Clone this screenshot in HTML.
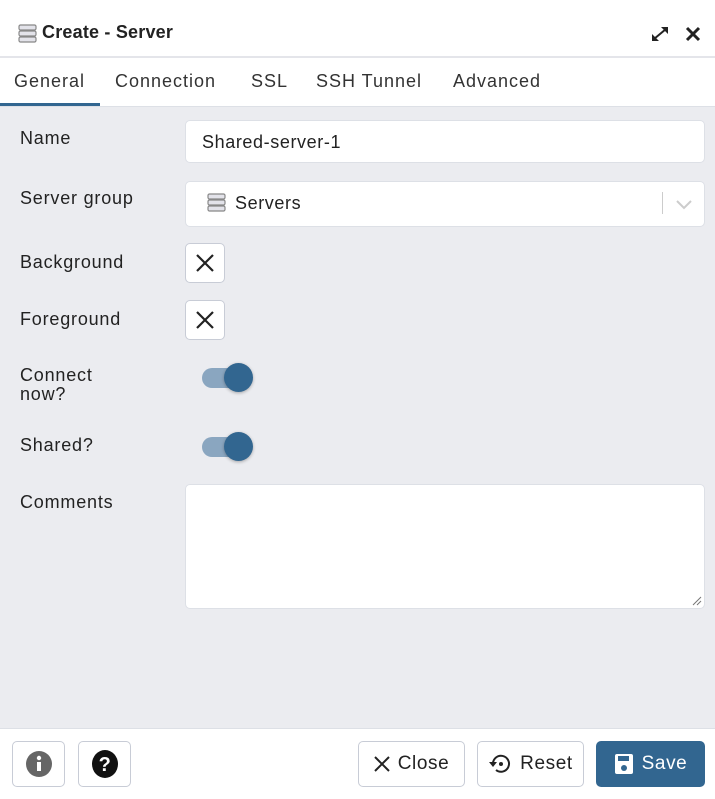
<!DOCTYPE html>
<html><head><style>
*{box-sizing:border-box;margin:0;padding:0}
body{width:715px;height:799px;background:#fff;font-family:"Liberation Sans",sans-serif;color:#222;position:relative;overflow:hidden}
.abs{position:absolute}
.title{left:18px;top:22px;font-size:18px;font-weight:bold;letter-spacing:0.2px;display:flex;align-items:center;gap:4px}
.hdrline{left:0;top:56px;width:715px;height:2px;background:#e4e5ea}
.tab{top:71px;font-size:18px;color:#333;letter-spacing:1px}
.uline{left:0;top:103px;width:100px;height:3px;background:#326690}
.body{left:0;top:106px;width:715px;height:623px;background:#ebecf0;border-top:1px solid #dde0e6;border-bottom:1px solid #dde0e6}
.lbl{left:20px;font-size:18px;color:#222;letter-spacing:0.8px}
.inp{background:#fff;border:1px solid #dde0e6;border-radius:5px}
.cb{width:40px;height:40px;background:#fff;border:1px solid #c8ccd6;border-radius:5px;left:185px}
.track{left:202px;width:48px;height:20px;border-radius:10px;background:#8aa6c0}
.knob{left:224px;width:29px;height:29px;border-radius:50%;background:#326690;box-shadow:0 1px 3px rgba(0,0,0,.3)}
.btn{top:741px;height:46px;border:1px solid #c8ccd6;border-radius:5px;background:#fff;display:flex;align-items:center;justify-content:center;font-size:19px;color:#222;gap:8px;letter-spacing:0.6px}
</style></head><body>
<div class="abs title"><svg width="20" height="20" viewBox="0 0 20 20"><g fill="#e3e3ea" stroke="#888" stroke-width="1.2"><rect x="1" y="2" width="17" height="5" rx="1.5"/><rect x="1" y="8" width="17" height="5" rx="1.5"/><rect x="1" y="14" width="17" height="5" rx="1.5"/></g></svg>Create - Server</div>
<svg class="abs" style="left:650px;top:25px" width="20" height="18" viewBox="0 0 20 18"><path d="M4 14 L16 4" stroke="#222" stroke-width="2"/><path d="M11 2h7v7z M2 9v7h7z" fill="#222"/></svg>
<svg class="abs" style="left:685px;top:26px" width="16" height="16" viewBox="0 0 16 16"><path d="M2 2L14 14M14 2L2 14" stroke="#222" stroke-width="3"/></svg>
<div class="abs hdrline"></div>
<div class="abs tab" style="left:14px">General</div>
<div class="abs tab" style="left:115px">Connection</div>
<div class="abs tab" style="left:251px">SSL</div>
<div class="abs tab" style="left:316px">SSH Tunnel</div>
<div class="abs tab" style="left:453px">Advanced</div>
<div class="abs body"></div>
<div class="abs uline"></div>
<div class="abs lbl" style="top:128px">Name</div>
<div class="abs inp" style="left:185px;top:120px;width:520px;height:43px;font-size:18px;padding:11px 0 0 16px;letter-spacing:0.6px">Shared-server-1</div>
<div class="abs lbl" style="top:188px">Server group</div>
<div class="abs inp" style="left:185px;top:181px;width:520px;height:46px"></div>
<svg class="abs" style="left:207px;top:192px" width="20" height="22" viewBox="0 0 20 22"><g fill="#e3e3ea" stroke="#888" stroke-width="1.2"><rect x="1" y="2" width="17" height="5" rx="1.5"/><rect x="1" y="8" width="17" height="5" rx="1.5"/><rect x="1" y="14" width="17" height="5" rx="1.5"/></g></svg>
<div class="abs" style="left:235px;top:193px;font-size:18px;letter-spacing:0.6px">Servers</div>
<div class="abs" style="left:662px;top:192px;width:1px;height:22px;background:#ccc"></div>
<svg class="abs" style="left:675px;top:198px" width="18" height="12" viewBox="0 0 18 12"><path d="M2 3l7 7 7-7" stroke="#ccc" stroke-width="2" fill="none"/></svg>
<div class="abs lbl" style="top:252px">Background</div>
<div class="abs cb" style="top:243px"><svg width="38" height="38" viewBox="0 0 38 38"><path d="M11 11L27 27M27 11L11 27" stroke="#222" stroke-width="2.2"/></svg></div>
<div class="abs lbl" style="top:309px">Foreground</div>
<div class="abs cb" style="top:300px"><svg width="38" height="38" viewBox="0 0 38 38"><path d="M11 11L27 27M27 11L11 27" stroke="#222" stroke-width="2.2"/></svg></div>
<div class="abs lbl" style="top:366px;line-height:19px">Connect<br>now?</div>
<div class="abs track" style="top:368px"></div><div class="abs knob" style="top:363px"></div>
<div class="abs lbl" style="top:435px">Shared?</div>
<div class="abs track" style="top:437px"></div><div class="abs knob" style="top:432px"></div>
<div class="abs lbl" style="top:492px">Comments</div>
<div class="abs inp" style="left:185px;top:484px;width:520px;height:125px"></div>
<svg class="abs" style="left:692px;top:596px" width="10" height="10"><path d="M1 9L9 1M5 9L9 5" stroke="#777"/></svg>
<div class="abs btn" style="left:12px;width:53px"><svg width="26" height="26"><circle cx="13" cy="13" r="13" fill="#666"/><rect x="11" y="11" width="4" height="9" fill="#fff"/><circle cx="13" cy="7" r="2.2" fill="#fff"/></svg></div>
<div class="abs btn" style="left:78px;width:53px"><svg width="26" height="28"><ellipse cx="13" cy="14" rx="13" ry="14" fill="#111"/><text x="13" y="21" text-anchor="middle" font-size="20" font-weight="bold" fill="#fff" font-family="Liberation Sans">?</text></svg></div>
<div class="abs btn" style="left:358px;width:107px"><svg width="16" height="16"><path d="M1 1L15 15M15 1L1 15" stroke="#222" stroke-width="2"/></svg>Close</div>
<div class="abs btn" style="left:477px;width:107px"><svg width="24" height="22" viewBox="0 0 24 22"><path d="M5 11a8 8 0 1 1 3 6" stroke="#222" stroke-width="2" fill="none"/><path d="M1 9l4 5 4-5z" fill="#222"/><circle cx="13" cy="11" r="2" fill="#222"/></svg>Reset</div>
<div class="abs btn" style="left:596px;width:109px;background:#326690;border-color:#326690;color:#fff"><svg width="20" height="22" viewBox="0 0 20 22"><rect x="1" y="1" width="18" height="20" rx="2" fill="#fff"/><rect x="4" y="3" width="11" height="5" fill="#326690"/><circle cx="10" cy="15" r="3" fill="#326690"/></svg>Save</div>
</body></html>
